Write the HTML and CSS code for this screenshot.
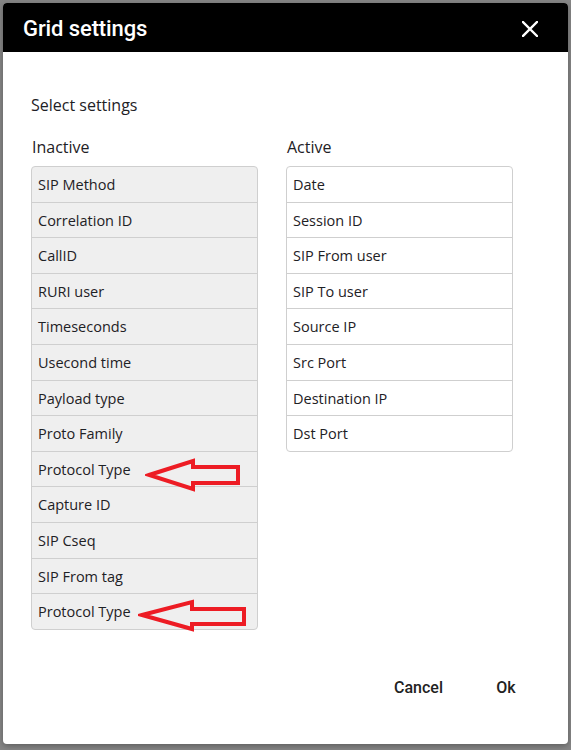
FILE: index.html
```html
<!DOCTYPE html>
<html>
<head>
<meta charset="utf-8">
<link rel="stylesheet" href="styles.css">
</head>
<body>
<div class="dialog">
  <div class="header">
    <h1 class="title">Grid settings</h1>
    <button class="close" aria-label="Close">
      <svg width="16" height="16" viewBox="0 0 16 16"><path d="M1 1L15 15M15 1L1 15" stroke="#fff" stroke-width="2.4" stroke-linecap="square"/></svg>
    </button>
  </div>
  <div class="content">
    <div class="subtitle">Select settings</div>
    <div class="columns">
      <div class="col">
        <div class="col-title">Inactive</div>
        <div class="list inactive">
          <div class="row">SIP Method</div>
          <div class="row">Correlation ID</div>
          <div class="row">CallID</div>
          <div class="row">RURI user</div>
          <div class="row">Timeseconds</div>
          <div class="row">Usecond time</div>
          <div class="row">Payload type</div>
          <div class="row">Proto Family</div>
          <div class="row">Protocol Type</div>
          <div class="row">Capture ID</div>
          <div class="row">SIP Cseq</div>
          <div class="row">SIP From tag</div>
          <div class="row">Protocol Type</div>
        </div>
      </div>
      <div class="col">
        <div class="col-title">Active</div>
        <div class="list active">
          <div class="row">Date</div>
          <div class="row">Session ID</div>
          <div class="row">SIP From user</div>
          <div class="row">SIP To user</div>
          <div class="row">Source IP</div>
          <div class="row">Src Port</div>
          <div class="row">Destination IP</div>
          <div class="row">Dst Port</div>
        </div>
      </div>
    </div>
  </div>
  <div class="actions">
    <button class="btn">Cancel</button>
    <button class="btn">Ok</button>
  </div>
  <svg class="arrow arrow1" width="100" height="36" viewBox="0 0 100 36">
    <path d="M4 17 L48 3 L48 9 L93 9 L93 25 L48 25 L48 31 Z" fill="none" stroke="#ed1c24" stroke-width="4" stroke-linejoin="miter"/>
  </svg>
  <svg class="arrow arrow2" width="110" height="36" viewBox="0 0 110 36">
    <path d="M4 16 L54 3 L54 10 L106 10 L106 25 L54 25 L54 30 Z" fill="none" stroke="#ed1c24" stroke-width="4" stroke-linejoin="miter"/>
  </svg>
</div>
</body>
</html>
```

FILE: styles.css
```css
html, body {
  margin: 0;
  padding: 0;
}
body {
  background: #868686;
  width: 571px;
  height: 750px;
  overflow: hidden;
  font-family: "Open Sans", "Noto Sans", sans-serif;
  color: #1e2125;
}
.dialog {
  position: relative;
  margin: 3px 0 0 3px;
  width: 565px;
  height: 741px;
  background: #fff;
  border-radius: 4px;
  overflow: hidden;
  display: flex;
  flex-direction: column;
  box-shadow: 0 2px 6px rgba(0,0,0,0.3);
}
.header {
  height: 49px;
  background: #000;
  display: flex;
  align-items: center;
  justify-content: space-between;
  padding: 0 30px 0 20px;
  flex-shrink: 0;
}
.title {
  margin: 0;
  font-family: Roboto, sans-serif;
  font-weight: 500;
  font-size: 22px;
  color: #fff;
  letter-spacing: -0.1px;
  padding-top: 2px;
}
.close {
  background: none;
  border: 0;
  padding: 0;
  width: 16px;
  height: 16px;
  display: flex;
  margin-top: 2px;
}
.content {
  padding: 42px 28px 0 28px;
  flex: 1;
}
.subtitle {
  font-size: 16px;
  line-height: 22px;
  margin-bottom: 20px;
}
.columns {
  display: flex;
  gap: 28px;
}
.col {
  width: 227px;
}
.col-title {
  font-size: 16px;
  line-height: 22px;
  margin-bottom: 8px;
  padding-left: 1px;
}
.list {
  border: 1px solid #cfcfcf;
  border-radius: 4px;
}
.list.inactive {
  background: #efefef;
}
.list.active {
  background: #fff;
}
.row {
  box-sizing: border-box;
  height: 35.6px;
  line-height: 36px;
  padding: 0 6px;
  font-size: 14.5px;
  border-bottom: 1px solid #cfcfcf;
}
.row:last-child {
  border-bottom: 0;
  height: 34.6px;
}
.actions {
  display: flex;
  justify-content: flex-end;
  gap: 15px;
  padding: 0 30px 39px 0;
}
.btn {
  font-family: Roboto, sans-serif;
  font-weight: 500;
  font-size: 16px;
  color: #222;
  background: none;
  border: 0;
  height: 36px;
  min-width: 64px;
  padding: 0 16px;
}
.arrow {
  position: absolute;
}
.arrow1 {
  left: 142px;
  top: 455px;
}
.arrow2 {
  left: 135px;
  top: 596px;
}
```
